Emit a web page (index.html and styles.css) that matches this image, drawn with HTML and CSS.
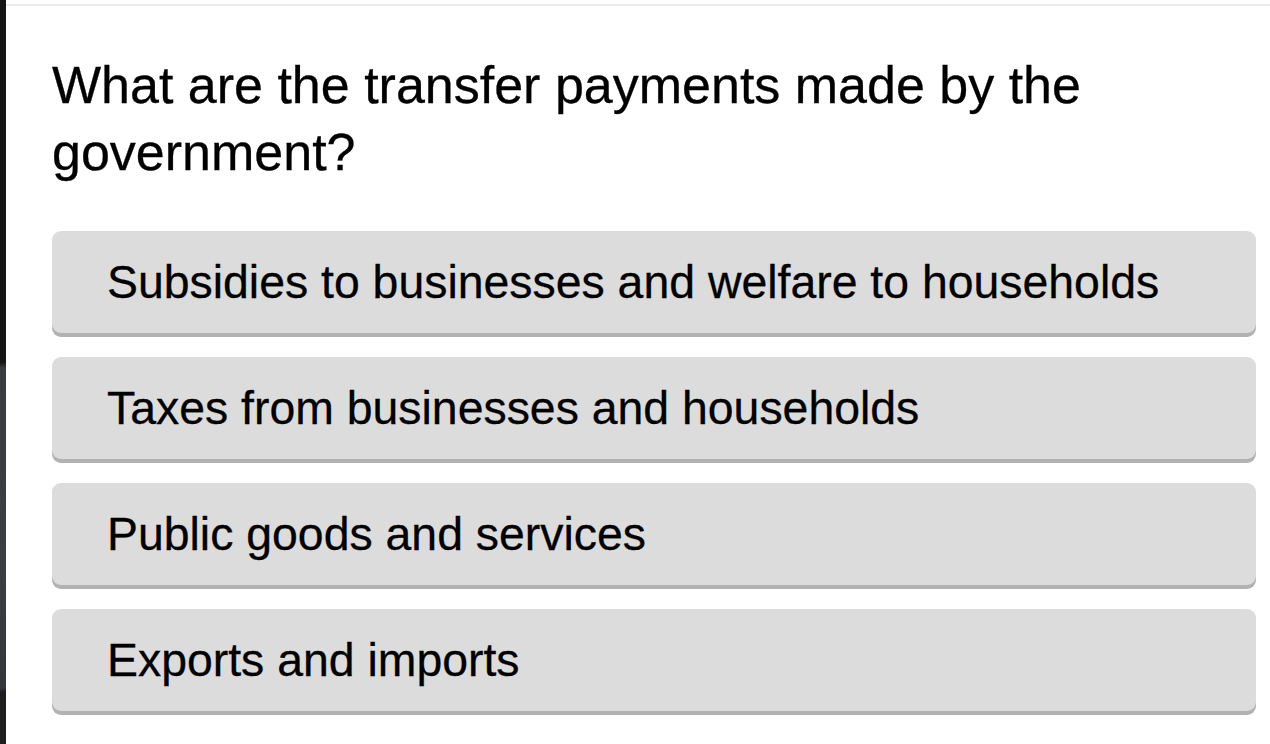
FILE: index.html
```html
<!DOCTYPE html>
<html lang="en">
<head>
    <meta charset="UTF-8">
    <meta name="viewport" content="width=device-width, initial-scale=1.0">
    <title>Quiz</title>
    <link rel="stylesheet" href="styles.css">
</head>
<body>
    <div class="page">
        <div class="edge"></div>
        <div class="main">
            <h1 class="question">What are the transfer payments made by the government?</h1>
            <div class="answers">
                <button class="answer">Subsidies to businesses and welfare to households</button>
                <button class="answer">Taxes from businesses and households</button>
                <button class="answer">Public goods and services</button>
                <button class="answer">Exports and imports</button>
            </div>
        </div>
    </div>
</body>
</html>
```

FILE: styles.css
```css
body { margin: 0; background: #fff; font-family: "Liberation Sans", Arial, sans-serif; color: #000; }
.page { display: flex; min-height: 744px; }
.edge { width: 6px; flex-shrink: 0; background: linear-gradient(to bottom, #151515 0, #151515 362px, #3a3b41 368px, #3d3e44 560px, #35363b 688px, #1e1e1e 692px, #1e1e1e 100%); }
.main { flex: 1; margin-top: 4px; border-top: 2px solid #ececec; padding: 0 14px 0 46px; }
.question { font-size: 52px; font-weight: normal; line-height: 67px; margin: 46px 0 45px; max-width: 1100px; -webkit-text-stroke: 0.3px #000; }
.answers { display: flex; flex-direction: column; gap: 24px; }
.answer { display: flex; align-items: center; height: 102px; padding: 0 55px; border: 0; border-radius: 9px; background: #dcdcdc; box-shadow: 0 4px 0 #b2b2b2; font-family: inherit; font-size: 46.4px; color: #000; text-align: left; cursor: pointer; -webkit-text-stroke: 0.3px #000; }
```
